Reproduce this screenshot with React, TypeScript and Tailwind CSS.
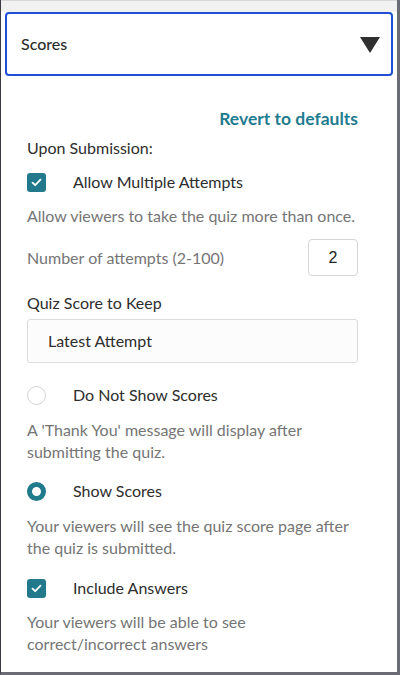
import React from "react";

const Check = () => (
  <div className="w-[19px] h-[19px] rounded-[3px] bg-[#23798c] flex items-center justify-center shrink-0">
    <svg width="11" height="9" viewBox="0 0 11 9" fill="none">
      <path d="M1.5 4.6L4.2 7.2L9.5 1.6" stroke="white" strokeWidth="1.8" strokeLinecap="round" strokeLinejoin="round" />
    </svg>
  </div>
);

export default function App() {
  return (
    <div
      className="w-[400px] h-[675px] bg-white border-l border-l-[#3a3a44] border-r-[3px] border-r-[#6b6b76] border-b-[3px] border-b-[#6b6b76] flex flex-col overflow-hidden text-[#2d2d2d]"
      style={{ fontFamily: "Lato, 'Noto Sans', sans-serif" }}
    >
      <div className="h-[12px] bg-[#f1f1f1] border-t border-t-[#d8d8d8] shrink-0" />
      <div className="mx-[4px] h-[64px] border-2 border-[#1f4fd6] rounded-[4px] flex items-center justify-between pl-[14px] pr-[10px] shrink-0">
        <span className="text-[16px] font-medium">Scores</span>
        <svg width="22" height="18" viewBox="0 0 22 18" className="mt-[2px]">
          <path d="M1 1H21L11 17Z" fill="#2f2f2f" />
        </svg>
      </div>
      <div className="pl-[26px] pr-[39px] flex flex-col">
        <div className="flex justify-end mt-[32px] h-[22px] items-center">
          <span className="text-[#1f7c90] text-[17.5px] font-bold">Revert to defaults</span>
        </div>
        <div className="mt-[7px] h-[22px] flex items-center text-[16px]">Upon Submission:</div>
        <div className="mt-[12px] h-[22px] flex items-center">
          <Check />
          <span className="ml-[27px] text-[16px]">Allow Multiple Attempts</span>
        </div>
        <div className="mt-[12px] text-[16px] leading-[22px] text-[#757575]">
          Allow viewers to take the quiz more than once.
        </div>
        <div className="mt-[12px] flex items-center justify-between h-[37px]">
          <span className="text-[16px] text-[#757575]">Number of attempts (2-100)</span>
          <div
            className="w-[50px] h-[37px] border border-[#d6d6d6] rounded-[4px] flex items-center justify-center text-[16px] text-[#222]"
            style={{ fontFamily: "'Liberation Sans', Arial, sans-serif" }}
          >
            2
          </div>
        </div>
        <div className="mt-[16px] h-[22px] flex items-center text-[16px]">Quiz Score to Keep</div>
        <div className="mt-[5px] h-[44px] border border-[#dcdcdc] rounded-[3px] bg-[#fcfcfc] flex items-center pl-[20px] text-[16px]">
          Latest Attempt
        </div>
        <div className="mt-[21px] h-[22px] flex items-center">
          <div className="w-[19px] h-[19px] rounded-full border border-[#d4d4d4] shrink-0" />
          <span className="ml-[27px] text-[16px]">Do Not Show Scores</span>
        </div>
        <div className="mt-[13px] text-[16px] leading-[22px] text-[#757575]">
          A 'Thank You' message will display after
          <br />
          submitting the quiz.
        </div>
        <div className="mt-[17px] h-[22px] flex items-center">
          <div className="w-[19px] h-[19px] rounded-full border-[5px] border-[#1f7a8c] shrink-0" />
          <span className="ml-[27px] text-[16px]">Show Scores</span>
        </div>
        <div className="mt-[13px] text-[16px] leading-[22px] text-[#757575]">
          Your viewers will see the quiz score page after
          <br />
          the quiz is submitted.
        </div>
        <div className="mt-[18px] h-[22px] flex items-center">
          <Check />
          <span className="ml-[27px] text-[16px]">Include Answers</span>
        </div>
        <div className="mt-[12px] text-[16px] leading-[22px] text-[#757575]">
          Your viewers will be able to see
          <br />
          correct/incorrect answers
        </div>
      </div>
    </div>
  );
}
